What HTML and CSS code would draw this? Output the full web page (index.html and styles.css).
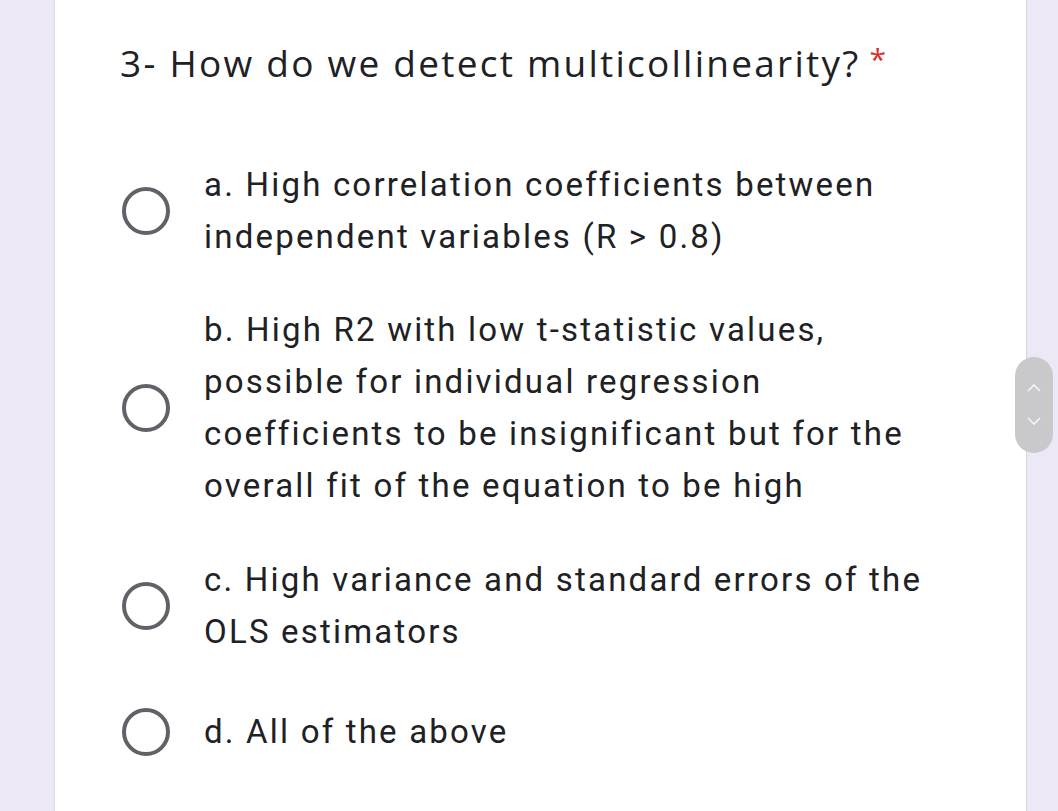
FILE: index.html
```html
<!DOCTYPE html>
<html>
<head>
<meta charset="utf-8">
<link rel="stylesheet" href="styles.css">
</head>
<body>
<div class="card">
  <div class="title">3- How do we detect multicollinearity?<span class="req">*</span></div>
  <div class="options">
    <div class="opt opt-a"><span class="radio"></span><div class="label">a. High correlation coefficients between<br>independent variables (R &gt; 0.8)</div></div>
    <div class="opt opt-b"><span class="radio"></span><div class="label">b. High R2 with low t-statistic values,<br>possible for individual regression<br>coefficients to be insignificant but for the<br>overall fit of the equation to be high</div></div>
    <div class="opt opt-c"><span class="radio"></span><div class="label">c. High variance and standard errors of the<br>OLS estimators</div></div>
    <div class="opt opt-d"><span class="radio"></span><div class="label">d. All of the above</div></div>
  </div>
</div>
<div class="scroller">
  <svg width="38" height="96" viewBox="0 0 38 96">
    <path d="M13 34 L19 28 L25 34" fill="none" stroke="#f4f4f4" stroke-width="1.6"/>
    <path d="M13 61 L19 67 L25 61" fill="none" stroke="#f4f4f4" stroke-width="1.6"/>
  </svg>
</div>
</body>
</html>
```
FILE: styles.css
```css
html, body {
  margin: 0;
  padding: 0;
}
body {
  background: #ece8f6;
  width: 1058px;
  height: 811px;
  overflow: hidden;
  position: relative;
}
.card {
  margin-left: 54px;
  width: 971px;
  height: 811px;
  background: #fff;
  border-left: 1px solid #dcdae0;
  border-right: 1px solid #d6d4dc;
  box-sizing: content-box;
  padding-top: 33px;
}
.title {
  font-family: "Open Sans", sans-serif;
  font-size: 37px;
  line-height: 60px;
  height: 60px;
  color: #202124;
  padding-left: 65px;
  letter-spacing: 2.25px;
}
.req {
  color: #d93025;
  font-size: 30px;
  line-height: 0;
  vertical-align: 7px;
  margin-left: 9px;
  letter-spacing: 0;
}
.options {
  margin-top: 66px;
  display: flex;
  flex-direction: column;
}
.opt {
  display: flex;
  align-items: center;
  padding-left: 67px;
}
.opt-b { margin-top: 41px; }
.opt-c { margin-top: 42px; }
.opt-d { margin-top: 48px; }
.radio {
  width: 40px;
  height: 40px;
  border: 4px solid #5f6368;
  border-radius: 50%;
  flex: none;
}
.label {
  margin-left: 34px;
  font-family: Roboto, sans-serif;
  font-size: 33px;
  line-height: 52px;
  color: #202124;
  letter-spacing: 2.2px;
}
.scroller {
  position: absolute;
  left: 1015px;
  top: 357px;
  width: 38px;
  height: 96px;
  border-radius: 19px;
  background: #c9c9cb;
}
.scroller svg { display: block; }
```
